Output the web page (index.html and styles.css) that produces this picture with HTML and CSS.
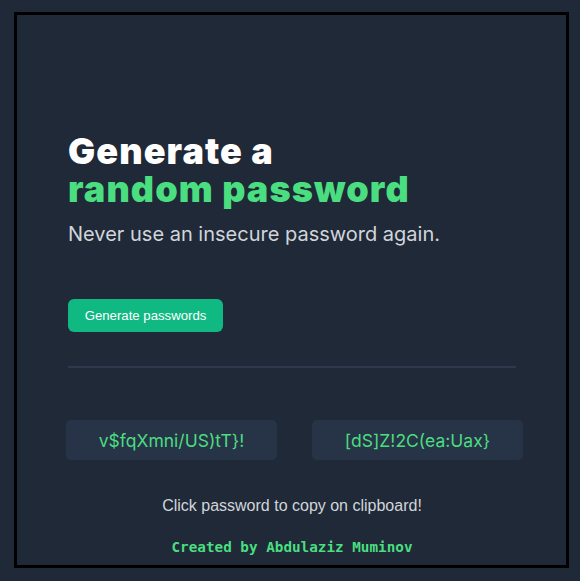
FILE: index.html
```html
<!DOCTYPE html>
<html lang="en">
<head>
<meta charset="utf-8">
<title>Password Generator</title>
<link rel="stylesheet" href="styles.css">
</head>
<body>
<div class="frame">
  <div class="hero">
    <h1 class="title">Generate a<br><span class="accent">random password</span></h1>
    <p class="subtitle">Never use an insecure password again.</p>
    <button class="btn" type="button">Generate passwords</button>
    <hr class="divider">
  </div>
  <div class="passwords">
    <div class="pw">v$fqXmni/US)tT}!</div>
    <div class="pw">[dS]Z!2C(ea:Uax}</div>
  </div>
  <p class="hint">Click password to copy on clipboard!</p>
  <p class="credit">Created by Abdulaziz Muminov</p>
</div>
</body>
</html>
```
FILE: styles.css
```css
html, body {
  margin: 0;
  padding: 0;
  background: #1f2937;
}
body {
  padding: 12px 11px 0 14px;
}
.frame {
  box-sizing: border-box;
  height: 556px;
  border: 3px solid #000;
  padding: 0 50px 0 51px;
  display: flex;
  flex-direction: column;
}
.hero {
  padding-top: 117px;
}
.title {
  margin: 0;
  font-family: Inter, sans-serif;
  font-weight: 900;
  font-size: 36px;
  line-height: 38px;
  color: #ffffff;
  letter-spacing: 1.1px;
}
.accent {
  color: #4ade80;
}
.subtitle {
  margin: 12px 0 0 0;
  font-family: Inter, sans-serif;
  font-size: 20px;
  line-height: 28px;
  color: #d1d5db;
}
.btn {
  margin-top: 51px;
  width: 155px;
  background: #10b981;
  color: #fff;
  border: 0;
  border-radius: 6px;
  height: 33px;
  padding: 0;
  font-family: "Liberation Sans", Arial, sans-serif;
  font-size: 13.2px;
}
.divider {
  margin: 34px 0 0 0;
  border: 0;
  height: 2px;
  background: #2d3a4d;
}
.passwords {
  display: flex;
  gap: 35px;
  margin: 52px -7px 0 -2px;
}
.pw {
  width: 211px;
  height: 40px;
  box-sizing: border-box;
  background: #273447;
  border-radius: 5px;
  display: flex;
  align-items: center;
  justify-content: center;
  font-family: Inter, sans-serif;
  font-size: 17.5px;
  color: #4ade80;
}
.hint {
  margin: 37px 0 0 0;
  text-align: center;
  font-family: "Liberation Sans", Arial, sans-serif;
  font-size: 16px;
  color: #d1d5db;
}
.credit {
  margin: 24px 0 0 0;
  text-align: center;
  font-family: "DejaVu Sans Mono", monospace;
  font-weight: 600;
  font-size: 14.3px;
  color: #4ade80;
}
```
